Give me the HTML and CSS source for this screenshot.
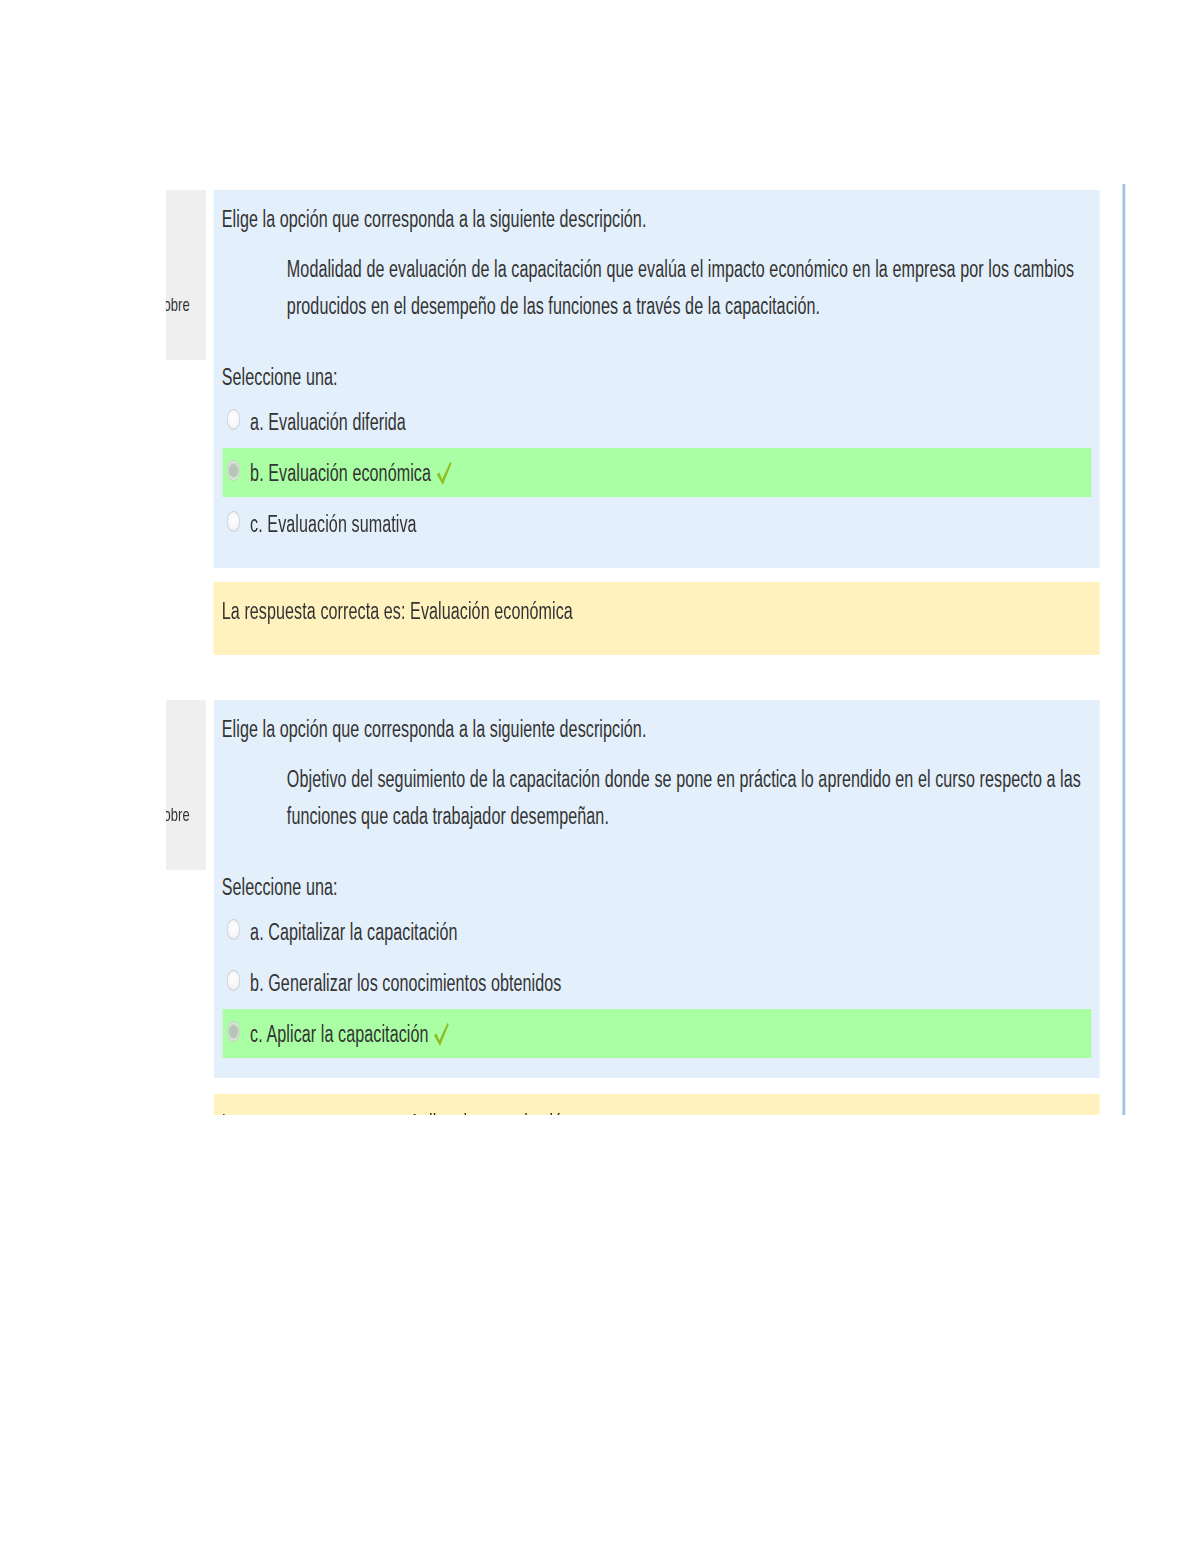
FILE: index.html
```html
<!DOCTYPE html>
<html lang="es">
<head>
<meta charset="utf-8">
<title>Cuestionario</title>
<link rel="stylesheet" href="styles.css">
</head>
<body>
<div class="page">
  <div class="shot">
    <div class="scaled">
      <div class="questions">

        <div class="que">
          <div class="info"><div class="grade"><span>Puntúa 1,00 sobre</span></div></div>
          <div class="content">
            <div class="formulation">
              <div class="qtext">Elige la opción que corresponda a la siguiente descripción.</div>
              <div class="desc">Modalidad de evaluación de la capacitación que evalúa el impacto económico en la empresa por los cambios<br>producidos en el desempeño de las funciones a través de la capacitación.</div>
              <div class="prompt">Seleccione una:</div>
              <div class="answers">
                <div class="opt"><span class="radio"></span><span class="label">a. Evaluación diferida</span></div>
                <div class="opt correct"><span class="radio checked"></span><span class="label">b. Evaluación económica</span><svg class="check" viewBox="0 0 24 26"><path d="M1 14 L5 12 L9 19 L21 1 L23 2.5 L10 25 Z"/></svg></div>
                <div class="opt"><span class="radio"></span><span class="label">c. Evaluación sumativa</span></div>
              </div>
            </div>
            <div class="feedback">La respuesta correcta es: Evaluación económica</div>
          </div>
        </div>

        <div class="que">
          <div class="info"><div class="grade"><span>Puntúa 1,00 sobre</span></div></div>
          <div class="content">
            <div class="formulation">
              <div class="qtext">Elige la opción que corresponda a la siguiente descripción.</div>
              <div class="desc">Objetivo del seguimiento de la capacitación donde se pone en práctica lo aprendido en el curso respecto a las<br>funciones que cada trabajador desempeñan.</div>
              <div class="prompt">Seleccione una:</div>
              <div class="answers">
                <div class="opt"><span class="radio"></span><span class="label">a. Capitalizar la capacitación</span></div>
                <div class="opt"><span class="radio"></span><span class="label">b. Generalizar los conocimientos obtenidos</span></div>
                <div class="opt correct"><span class="radio checked"></span><span class="label">c. Aplicar la capacitación</span><svg class="check" viewBox="0 0 24 26"><path d="M1 14 L5 12 L9 19 L21 1 L23 2.5 L10 25 Z"/></svg></div>
              </div>
            </div>
            <div class="feedback second">La respuesta correcta es: Aplicar la capacitación</div>
          </div>
        </div>

      </div>
      <div class="rule"></div>
    </div>
  </div>
</div>
</body>
</html>
```

FILE: styles.css
```css
html, body {
  margin: 0;
  padding: 0;
  background: #ffffff;
}

.page {
  width: 1200px;
  height: 1553px;
  overflow: hidden;
  background: #ffffff;
  font-family: "Liberation Sans", Arial, sans-serif;
  color: #333333;
  letter-spacing: 0.12px;
}

.shot {
  margin-top: 184px;
  height: 931px;
  overflow: hidden;
}

.scaled {
  width: 1714px;
  display: flex;
  align-items: stretch;
  padding-left: 237px;
  box-sizing: border-box;
  transform: scaleX(0.7);
  transform-origin: 0 0;
}

.questions {
  width: 1334px;
  padding-top: 6px;
}

.rule {
  width: 3px;
  margin-left: 33px;
  background: #a2bfdb;
  box-shadow: 0 0 0 1px #d3e3f1;
  min-height: 940px;
}

.que {
  display: flex;
  gap: 11.4px;
  margin-bottom: 45px;
}

.info {
  width: 57px;
  height: 170px;
  background: #efefef;
  overflow: hidden;
  flex: none;
}

.grade {
  display: flex;
  justify-content: flex-end;
  padding-top: 103px;
  padding-right: 23px;
  font-size: 18.5px;
  line-height: 24px;
  white-space: nowrap;
  color: #333333;
}

.grade span {
  flex: none;
}

.content {
  width: 1266px;
  flex: none;
}

.formulation {
  background: #e3effa;
  padding: 14px 11.4px 20px;
}

.qtext {
  font-size: 23px;
  line-height: 30px;
  white-space: nowrap;
}

.desc {
  margin-top: 16.5px;
  padding-left: 93px;
  font-size: 23px;
  line-height: 37px;
  white-space: nowrap;
}

.prompt {
  margin-top: 37.5px;
  font-size: 23px;
  line-height: 30px;
}

.answers {
  margin-top: 5px;
  display: flex;
  flex-direction: column;
  gap: 2px;
}

.opt {
  height: 49px;
  margin: 0 1.5px;
  display: flex;
  align-items: center;
  font-size: 23px;
  line-height: 30px;
  white-space: nowrap;
}

.opt.correct {
  background: #aaffa4;
}

.radio {
  flex: none;
  width: 19px;
  height: 21px;
  margin-left: 6px;
  margin-right: 14px;
  border-radius: 50%;
  border: 1.5px solid #c9cdd1;
  background: radial-gradient(circle at 50% 40%, #ffffff 0%, #f3f5f7 60%, #dfe3e7 100%);
  box-sizing: border-box;
  margin-top: -5px;
}

.radio.checked {
  border-color: #c5cfc5;
  background: radial-gradient(circle at 50% 50%, #b5c3b5 0%, #b8c6b8 45%, #d9e3d9 62%, #edf3ed 100%);
}

.check {
  width: 23px;
  height: 25px;
  margin-left: 7px;
  margin-top: 2px;
  flex: none;
}

.check path {
  fill: #8fbe26;
}

.feedback {
  margin-top: 14px;
  background: #fff2bf;
  padding: 14px 11.4px 29px;
  font-size: 23px;
  line-height: 30px;
  white-space: nowrap;
}

.feedback.second {
  margin-top: 16px;
}
```
